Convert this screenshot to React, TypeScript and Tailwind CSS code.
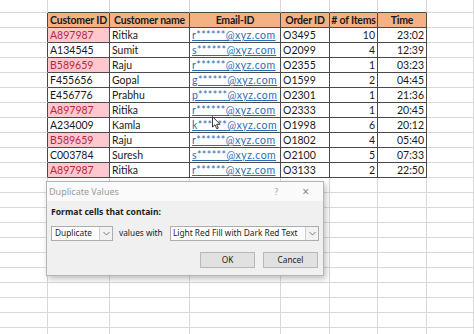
import React from 'react';

type Row = { id: string; name: string; email: string; order: string; items: string; time: string; dup?: boolean };

const rows: Row[] = [
  { id: 'A897987', name: 'Ritika', email: 'r******@xyz.com', order: 'O3495', items: '10', time: '23:02', dup: true },
  { id: 'A134545', name: 'Sumit', email: 's******@xyz.com', order: 'O2099', items: '4', time: '12:39' },
  { id: 'B589659', name: 'Raju', email: 'r******@xyz.com', order: 'O2355', items: '1', time: '03:23', dup: true },
  { id: 'F455656', name: 'Gopal', email: 'g******@xyz.com', order: 'O1599', items: '2', time: '04:45' },
  { id: 'E456776', name: 'Prabhu', email: 'p******@xyz.com', order: 'O2301', items: '1', time: '21:36' },
  { id: 'A897987', name: 'Ritika', email: 'r******@xyz.com', order: 'O2333', items: '1', time: '20:45', dup: true },
  { id: 'A234009', name: 'Kamla', email: 'k******@xyz.com', order: 'O1998', items: '6', time: '20:12' },
  { id: 'B589659', name: 'Raju', email: 'r******@xyz.com', order: 'O1802', items: '4', time: '05:40', dup: true },
  { id: 'C003784', name: 'Suresh', email: 's******@xyz.com', order: 'O2100', items: '5', time: '07:33' },
  { id: 'A897987', name: 'Ritika', email: 'r******@xyz.com', order: 'O3133', items: '2', time: '22:50', dup: true },
];

// column widths incl. right gridline
const colW = ['w-[48px]', 'w-[62px]', 'w-[80px]', 'w-[91px]', 'w-[49px]', 'w-[48px]', 'w-[49px]', 'flex-1'];

const grid = 'border-r border-b border-[#d9d9d9]';
const dark = 'border-r border-b border-[#4a4a4a]';

function EmptyRow({ h, tableBottom }: { h: string; tableBottom?: boolean }) {
  return (
    <div className={`flex ${h}`}>
      {colW.map((w, i) => (
        <div
          key={i}
          className={`${w} shrink-0 ${tableBottom && i > 0 && i < 7 ? 'border-r border-b border-[#d9d9d9] border-b-[#4a4a4a]' : grid}`}
        />
      ))}
    </div>
  );
}

function Chevron() {
  return (
    <svg width="7" height="5" viewBox="0 0 7 5" fill="none" stroke="#7a7a7a" strokeWidth="1">
      <path d="M0.5 1 L3.5 4 L6.5 1" />
    </svg>
  );
}

export default function App() {
  return (
    <div className="relative w-[474px] h-[334px] overflow-hidden bg-white font-['Lato',sans-serif] text-[10.5px] text-[#1a1a1a]">
      <EmptyRow h="h-[13px]" tableBottom />

      {/* header */}
      <div className="flex h-[15px]">
        <div className={`${colW[0]} shrink-0 border-r border-b border-[#d9d9d9] border-r-[#4a4a4a]`} />
        {['Customer ID', 'Customer name', 'Email-ID', 'Order ID', '# of Items', 'Time'].map((t, i) => (
          <div
            key={t}
            className={`${colW[i + 1]} shrink-0 ${dark} bg-[#f4b183] font-bold flex items-center justify-center leading-none tracking-[-0.2px] whitespace-nowrap`}
          >
            {t}
          </div>
        ))}
        <div className={`${colW[7]} ${grid}`} />
      </div>

      {rows.map((r, k) => (
        <div key={k} className="flex h-[15px] leading-none">
          <div className={`${colW[0]} shrink-0 border-r border-b border-[#d9d9d9] border-r-[#4a4a4a]`} />
          <div className={`${colW[1]} shrink-0 ${dark} flex items-center pl-[2px] ${r.dup ? 'bg-[#ffc7ce] text-[#b8283d]' : ''}`}>
            {r.id}
          </div>
          <div className={`${colW[2]} shrink-0 ${dark} flex items-center pl-[2px]`}>{r.name}</div>
          <div className={`${colW[3]} shrink-0 ${dark} flex items-center pl-[2px] text-[#2e6db4] underline underline-offset-1 tracking-[0.45px]`}>
            {r.email}
          </div>
          <div className={`${colW[4]} shrink-0 ${dark} flex items-center pl-[2px]`}>{r.order}</div>
          <div className={`${colW[5]} shrink-0 ${dark} flex items-center justify-end pr-[2px]`}>{r.items}</div>
          <div className={`${colW[6]} shrink-0 ${dark} flex items-center justify-end pr-[2px]`}>{r.time}</div>
          <div className={`${colW[7]} ${grid}`} />
        </div>
      ))}

      {Array.from({ length: 11 }).map((_, i) => (
        <EmptyRow key={i} h="h-[15px]" />
      ))}

      {/* Duplicate Values dialog */}
      <div className="absolute left-[46px] top-[181px] w-[278px] h-[95px] border border-[#b5b5b5] bg-[#f0f0f0] shadow-[2px_3px_6px_rgba(0,0,0,0.25)] font-['Noto_Sans',sans-serif] text-[8.3px] text-[#222] flex flex-col whitespace-nowrap">
        <div className="h-[19px] bg-[#fafafa] flex items-center pl-[2px] pr-[14px] text-[#9a9a9a] text-[9px]">
          <span>Duplicate Values</span>
          <span className="ml-auto mr-[24px] text-[#aaa]">?</span>
          <span className="text-[#888] text-[12px] leading-none">×</span>
        </div>
        <div className="px-[4px] pt-[5px] font-bold text-[8.6px]">Format cells that contain:</div>
        <div className="flex items-center pl-[4px] mt-[7px]">
          <div className="w-[62px] h-[15px] shrink-0 bg-white border border-[#adadad] flex items-center">
            <span className="pl-[3px] flex-1">Duplicate</span>
            <span className="w-[13px] h-full bg-[#f2f2f2] border-l border-[#d0d0d0] flex items-center justify-center">
              <Chevron />
            </span>
          </div>
          <span className="ml-[6px]">values with</span>
          <div className="ml-auto mr-[4px] w-[149px] h-[15px] shrink-0 bg-white border border-[#adadad] flex items-center">
            <span className="pl-[2px] flex-1">Light Red Fill with Dark Red Text</span>
            <span className="w-[13px] h-full bg-[#f2f2f2] border-l border-[#d0d0d0] flex items-center justify-center">
              <Chevron />
            </span>
          </div>
        </div>
        <div className="flex justify-end gap-[8px] pr-[5px] mt-[11px]">
          <div className="w-[55px] h-[16px] bg-[#e1e1e1] border border-[#b8b8b8] flex items-center justify-center">OK</div>
          <div className="w-[55px] h-[16px] bg-[#e1e1e1] border border-[#b8b8b8] flex items-center justify-center">Cancel</div>
        </div>
      </div>

      {/* mouse cursor */}
      <svg className="absolute left-[212px] top-[116px]" width="9" height="14" viewBox="0 0 9 14">
        <path d="M0.5 0.5 L0.5 11 L3 8.8 L4.8 12.8 L6.3 12.1 L4.6 8.3 L8 8.3 Z" fill="#fff" stroke="#222" strokeWidth="0.9" strokeLinejoin="round" />
      </svg>
    </div>
  );
}
